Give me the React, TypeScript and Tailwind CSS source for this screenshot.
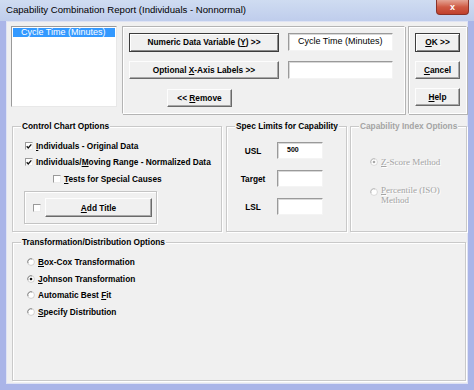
import React from 'react';

const FONT = { fontFamily: '"Liberation Sans", Arial, sans-serif' };

// access-key underline helper
const U: React.FC<{ children: React.ReactNode }> = ({ children }) => <span className="underline underline-offset-[1px]">{children}</span>;

const Btn: React.FC<{ w: string; h?: string; def?: boolean; children: React.ReactNode }> = ({ w, h = 'h-[19px]', def, children }) => (
  <div
    className={`${w} ${h} flex items-center justify-center bg-[#f0f0f0] text-[8.3px] font-bold text-black ${
      def
        ? 'border border-[#3c3c3c] shadow-[inset_1px_1px_0_#ffffff,inset_-1px_-1px_0_#8a8a8a]'
        : 'border border-t-[#fdfdfd] border-l-[#fdfdfd] border-r-[#6a6a6a] border-b-[#6a6a6a] shadow-[inset_-1px_-1px_0_#a8a8a8]'
    }`}
  >
    <span className="whitespace-pre">{children}</span>
  </div>
);

const TextBox: React.FC<{ w: string; h: string; value?: string; bold?: boolean }> = ({ w, h, value, bold }) => (
  <div
    className={`${w} ${h} bg-white border border-t-[#9a9a9a] border-l-[#9a9a9a] border-r-[#f4f4f4] border-b-[#f4f4f4] shadow-[inset_1px_1px_0_#d8d8d8] pl-[9px] pt-[1px] ${
      bold ? 'text-[7px]' : 'text-[9px]'
    } leading-[12px] text-black`}
  >
    {value}
  </div>
);

const Check: React.FC<{ checked?: boolean }> = ({ checked }) => (
  <div className="w-[8px] h-[8px] bg-white border border-t-[#9a9a9a] border-l-[#9a9a9a] border-r-[#ececec] border-b-[#ececec] flex items-center justify-center shrink-0">
    {checked && (
      <svg width="7" height="7" viewBox="0 0 7 7">
        <path d="M0.8 3.2 L2.6 5.2 L6.2 1" fill="none" stroke="#111" strokeWidth="1.5" />
      </svg>
    )}
  </div>
);

const Radio: React.FC<{ on?: boolean; disabled?: boolean }> = ({ on, disabled }) => (
  <svg width="8" height="8" viewBox="0 0 8 8" className="shrink-0">
    <circle cx="4" cy="4" r="3.4" fill="#ffffff" stroke={disabled ? '#d0d0d0' : '#c8c8c8'} strokeWidth="0.8" />
    <path d="M1 5.2 A3.2 3.2 0 0 1 5.2 1" fill="none" stroke={disabled ? '#b4b4b4' : '#7a7a7a'} strokeWidth="0.9" />
    {on && <circle cx="4" cy="4" r="1.3" fill={disabled ? '#a8a8a8' : '#111'} />}
  </svg>
);

const Group: React.FC<{ label: string; w: string; h: string; disabled?: boolean; children?: React.ReactNode }> = ({ label, w, h, disabled, children }) => (
  <div className={`${w} ${h} border border-[#c9c9c9] shadow-[inset_1px_1px_0_#ffffff,1px_1px_0_#ffffff] flex flex-col`}>
    <div
      className={`-mt-[6px] ml-[8px] px-[1px] w-fit bg-[#f0f0f0] text-[8.3px] leading-[10px] font-bold ${
        disabled ? 'text-[#a4a4a4]' : 'text-black'
      }`}
    >
      {label}
    </div>
    {children}
  </div>
);

export default function App() {
  return (
    <div className="w-[474px] h-[390px] bg-[#aab5e8] flex flex-col overflow-hidden" style={FONT}>
      {/* title bar */}
      <div className="h-[21px] shrink-0 flex justify-between bg-gradient-to-b from-[#cfdcf1] to-[#bfcdec]">
        <div className="pl-[6px] pt-[4px] text-[9.6px] leading-[12px] text-black">
          Capability Combination Report (Individuals - Nonnormal)
        </div>
        <div className="mr-[5px] w-[33px] h-[15px] rounded-b-[4px] border border-t-0 border-[#8a3228] bg-gradient-to-b from-[#e3a394] via-[#cf5a44] to-[#c0402c] flex items-center justify-center text-white text-[9px] font-bold leading-none">
          x
        </div>
      </div>

      {/* client area */}
      <div className="mx-[6px] mb-[6px] flex-1 border border-[#dfe3f4] bg-[#f0f0f0] flex flex-col pl-[4px] pt-[4px]">
        {/* top row */}
        <div className="flex">
          <div className="w-[106px] h-[81px] bg-white border border-t-[#9a9a9a] border-l-[#9a9a9a] border-r-[#e8e8e8] border-b-[#e8e8e8] p-[1px]">
            <div className="h-[9px] bg-[#3399ff] text-white text-[9px] leading-[9px] pl-[8px]">Cycle Time (Minutes)</div>
          </div>

          <div className="ml-[5px] w-[283px] h-[88px] border border-t-[#b4b4b4] border-l-[#b4b4b4] border-r-[#ffffff] border-b-[#ffffff] shadow-[1px_1px_0_#b4b4b4,inset_1px_1px_0_#ffffff] flex flex-col pl-[6px] pt-[6px]">
            <div className="flex items-start">
              <Btn w="w-[150px]" def>
                Numeric Data Variable (<U>Y</U>) &gt;&gt;
              </Btn>
              <div className="ml-[9px]">
                <TextBox w="w-[105px]" h="h-[18px]" value="Cycle Time (Minutes)" />
              </div>
            </div>
            <div className="flex items-start mt-[9px]">
              <Btn w="w-[150px]" h="h-[18px]">
                Optional <U>X</U>-Axis Labels &gt;&gt;
              </Btn>
              <div className="ml-[9px]">
                <TextBox w="w-[105px]" h="h-[18px]" />
              </div>
            </div>
            <div className="mt-[10px] ml-[38px]">
              <Btn w="w-[65px]" h="h-[18px]">
                &lt;&lt; <U>R</U>emove
              </Btn>
            </div>
          </div>

          <div className="ml-[3px] w-[59px] h-[88px] border border-t-[#b4b4b4] border-l-[#b4b4b4] border-r-[#ffffff] border-b-[#ffffff] shadow-[1px_1px_0_#b4b4b4,inset_1px_1px_0_#ffffff] flex flex-col items-start pl-[6px] pt-[6px] gap-[9px]">
            <Btn w="w-[45px]" def>
              <U>O</U>K &gt;&gt;
            </Btn>
            <Btn w="w-[45px]" h="h-[18px]">
              <U>C</U>ancel
            </Btn>
            <Btn w="w-[45px]" h="h-[18px]">
              <U>H</U>elp
            </Btn>
          </div>
        </div>

        {/* middle row */}
        <div className="flex mt-[12px] ml-[1px]">
          <Group label="Control Chart Options" w="w-[210px]" h="h-[106px]">
            <div className="flex flex-col pl-[12px] text-[8.3px] font-bold leading-[10px]">
              <div className="flex items-center gap-[3px] mt-[10px]">
                <Check checked />
                <span><U>I</U>ndividuals - Original Data</span>
              </div>
              <div className="flex items-center gap-[3px] mt-[6px]">
                <Check checked />
                <span>Individuals/<U>M</U>oving Range - Normalized Data</span>
              </div>
              <div className="flex items-center gap-[3px] mt-[7px] ml-[28px]">
                <Check />
                <span><U>T</U>ests for Special Causes</span>
              </div>
              <div className="mt-[7px] -ml-[1px] w-[133px] h-[33px] border border-[#c4c4c4] shadow-[inset_1px_1px_0_#ffffff,1px_1px_0_#ffffff] flex items-center pl-[8px]">
                <Check />
                <div className="ml-[4px]">
                  <Btn w="w-[107px]" h="h-[19px]">
                    <U>A</U>dd Title
                  </Btn>
                </div>
              </div>
            </div>
          </Group>

          <div className="ml-[4px]">
            <Group label="Spec Limits for Capability" w="w-[121px]" h="h-[106px]">
              <div className="flex flex-col text-[8.3px] font-bold leading-[10px] mt-[11px] gap-[11px]">
                {[
                  ['USL', '500'],
                  ['Target', ''],
                  ['LSL', ''],
                ].map(([l, v]) => (
                  <div key={l} className="flex items-center">
                    <div className="w-[50px] text-center pl-[2px]">{l}</div>
                    <TextBox w="w-[46px]" h="h-[17px]" value={v} bold />
                  </div>
                ))}
              </div>
            </Group>
          </div>

          <div className="ml-[3px]">
            <Group label="Capability Index Options" w="w-[117px]" h="h-[106px]" disabled>
              <div className="flex flex-col pl-[19px] text-[9px] text-[#a4a4a4] leading-[10px] [font-family:'Liberation_Serif',serif]">
                <div className="flex items-center gap-[3px] mt-[26px]">
                  <Radio on disabled />
                  <span className="[text-shadow:1px_1px_0_#ffffff]"><U>Z</U>-Score Method</span>
                </div>
                <div className="flex items-start gap-[3px] mt-[18px]">
                  <div className="mt-[3px]">
                    <Radio disabled />
                  </div>
                  <span className="[text-shadow:1px_1px_0_#ffffff]">
                    <U>P</U>ercentile (ISO)
                    <br />
                    Method
                  </span>
                </div>
              </div>
            </Group>
          </div>
        </div>

        {/* bottom group */}
        <div className="mt-[10px] ml-[1px]">
          <Group label="Transformation/Distribution Options" w="w-[454px]" h="h-[139px]">
            <div className="flex flex-col pl-[14px] text-[8.3px] font-bold leading-[10px] mt-[10px] gap-[6.5px]">
              <div className="flex items-center gap-[3px]">
                <Radio />
                <span><U>B</U>ox-Cox Transformation</span>
              </div>
              <div className="flex items-center gap-[3px]">
                <Radio on />
                <span><U>J</U>ohnson Transformation</span>
              </div>
              <div className="flex items-center gap-[3px]">
                <Radio />
                <span>Automatic Best <U>F</U>it</span>
              </div>
              <div className="flex items-center gap-[3px]">
                <Radio />
                <span><U>S</U>pecify Distribution</span>
              </div>
            </div>
          </Group>
        </div>
      </div>
    </div>
  );
}
